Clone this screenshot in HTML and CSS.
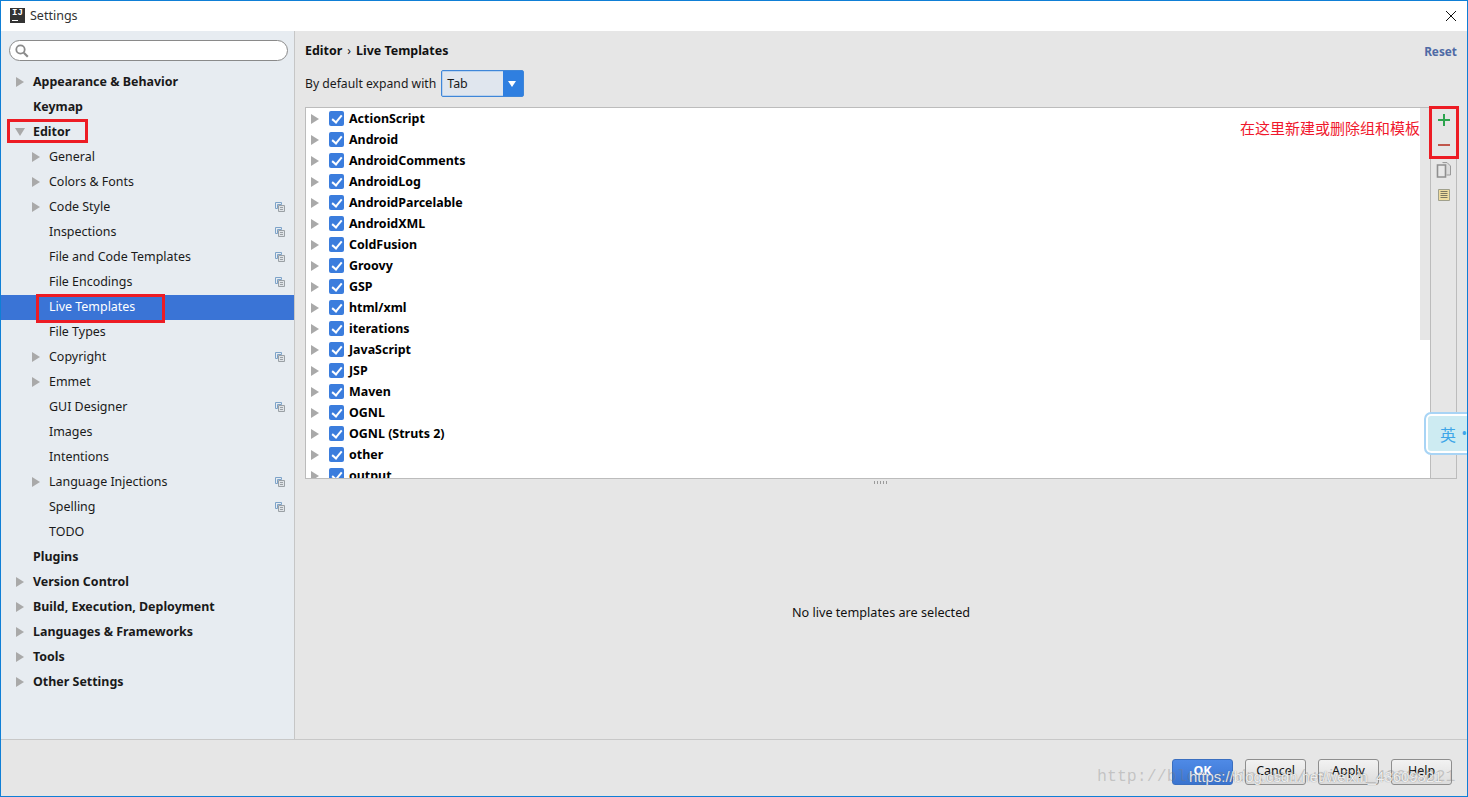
FILE: index.html
```html
<!DOCTYPE html>
<html lang="en">
<head>
<meta charset="utf-8">
<title>Settings</title>
<link rel="stylesheet" href="styles.css">
</head>
<body>
<div class="window">
  <header class="titlebar">
    <div class="app-logo"><span class="logo-text">IJ</span><span class="logo-bar"></span></div>
    <span class="title">Settings</span>
    <svg class="close" width="12" height="12" viewBox="0 0 12 12"><path d="M1 1l10 10M11 1L1 11" stroke="#111" stroke-width="1" fill="none"/></svg>
  </header>
  <div class="main">
    <aside class="sidebar">
      <div class="search">
        <svg width="16" height="16" viewBox="0 0 16 16"><circle cx="6.5" cy="6.5" r="4.2" fill="none" stroke="#8a8a8a" stroke-width="1.8"/><path d="M9.8 9.8l4 4" stroke="#8a8a8a" stroke-width="2.2"/></svg>
      </div>
      <nav class="tree">
        <div class="row top"><i class="tri"></i>Appearance &amp; Behavior</div>
        <div class="row top"><i class="none"></i>Keymap</div>
        <div class="row top"><i class="tri down"></i>Editor</div>
        <div class="row sub"><i class="tri"></i>General</div>
        <div class="row sub"><i class="tri"></i>Colors &amp; Fonts</div>
        <div class="row sub"><i class="tri"></i>Code Style<svg class="copy" width="10" height="10" viewBox="0 0 10 10"><use href="#proj"/></svg></div>
        <div class="row sub"><i class="none"></i>Inspections<svg class="copy" width="10" height="10" viewBox="0 0 10 10"><use href="#proj"/></svg></div>
        <div class="row sub"><i class="none"></i>File and Code Templates<svg class="copy" width="10" height="10" viewBox="0 0 10 10"><use href="#proj"/></svg></div>
        <div class="row sub"><i class="none"></i>File Encodings<svg class="copy" width="10" height="10" viewBox="0 0 10 10"><use href="#proj"/></svg></div>
        <div class="row sub selected"><i class="none"></i>Live Templates</div>
        <div class="row sub"><i class="none"></i>File Types</div>
        <div class="row sub"><i class="tri"></i>Copyright<svg class="copy" width="10" height="10" viewBox="0 0 10 10"><use href="#proj"/></svg></div>
        <div class="row sub"><i class="tri"></i>Emmet</div>
        <div class="row sub"><i class="none"></i>GUI Designer<svg class="copy" width="10" height="10" viewBox="0 0 10 10"><use href="#proj"/></svg></div>
        <div class="row sub"><i class="none"></i>Images</div>
        <div class="row sub"><i class="none"></i>Intentions</div>
        <div class="row sub"><i class="tri"></i>Language Injections<svg class="copy" width="10" height="10" viewBox="0 0 10 10"><use href="#proj"/></svg></div>
        <div class="row sub"><i class="none"></i>Spelling<svg class="copy" width="10" height="10" viewBox="0 0 10 10"><use href="#proj"/></svg></div>
        <div class="row sub"><i class="none"></i>TODO</div>
        <div class="row top"><i class="none"></i>Plugins</div>
        <div class="row top"><i class="tri"></i>Version Control</div>
        <div class="row top"><i class="tri"></i>Build, Execution, Deployment</div>
        <div class="row top"><i class="tri"></i>Languages &amp; Frameworks</div>
        <div class="row top"><i class="tri"></i>Tools</div>
        <div class="row top"><i class="tri"></i>Other Settings</div>
      </nav>
    </aside>
    <section class="content">
      <div class="crumbs"><b>Editor</b><span class="sep">›</span><b>Live Templates</b><a class="reset">Reset</a></div>
      <div class="expand">
        <span>By default expand with</span>
        <div class="combo"><span class="combo-value">Tab</span><span class="combo-arrow"></span></div>
      </div>
      <div class="panel">
        <div class="list">
          <div class="item"><i class="tri"></i><span class="check"></span>ActionScript</div>
          <div class="item"><i class="tri"></i><span class="check"></span>Android</div>
          <div class="item"><i class="tri"></i><span class="check"></span>AndroidComments</div>
          <div class="item"><i class="tri"></i><span class="check"></span>AndroidLog</div>
          <div class="item"><i class="tri"></i><span class="check"></span>AndroidParcelable</div>
          <div class="item"><i class="tri"></i><span class="check"></span>AndroidXML</div>
          <div class="item"><i class="tri"></i><span class="check"></span>ColdFusion</div>
          <div class="item"><i class="tri"></i><span class="check"></span>Groovy</div>
          <div class="item"><i class="tri"></i><span class="check"></span>GSP</div>
          <div class="item"><i class="tri"></i><span class="check"></span>html/xml</div>
          <div class="item"><i class="tri"></i><span class="check"></span>iterations</div>
          <div class="item"><i class="tri"></i><span class="check"></span>JavaScript</div>
          <div class="item"><i class="tri"></i><span class="check"></span>JSP</div>
          <div class="item"><i class="tri"></i><span class="check"></span>Maven</div>
          <div class="item"><i class="tri"></i><span class="check"></span>OGNL</div>
          <div class="item"><i class="tri"></i><span class="check"></span>OGNL (Struts 2)</div>
          <div class="item"><i class="tri"></i><span class="check"></span>other</div>
          <div class="item"><i class="tri"></i><span class="check"></span>output</div>
          <div class="scrollbar"></div>
          <div class="note">在这里新建或删除组和模板</div>
        </div>
        <div class="tools">
          <svg width="14" height="14" viewBox="0 0 14 14"><path d="M7 1v12M1 7h12" stroke="#2da44e" stroke-width="2"/></svg>
          <svg width="14" height="14" viewBox="0 0 14 14"><path d="M1 7h12" stroke="#c0574c" stroke-width="2"/></svg>
          <svg class="tool-doc" width="16" height="16" viewBox="0 0 16 16"><path d="M6.5.5h4.5l3.5 3.5v9h-4" fill="#dcdcdc" stroke="#9a9a9a"/><path d="M1.5 3h8v12h-8z" fill="#e8e8e8" stroke="#8f8f8f" stroke-width="1.6"/></svg>
          <svg width="14" height="14" viewBox="0 0 14 14"><path d="M1.5 1.5h11v11h-11z" fill="#f0dca0" stroke="#a0a08c"/><path d="M3.5 3.5h7M3.5 5.5h7M3.5 7.5h7M3.5 9.5h7" stroke="#7d7760"/></svg>
        </div>
      </div>
      <div class="splitter"></div>
      <div class="empty">No live templates are selected</div>
    </section>
  </div>
  <footer class="footer">
    <button class="btn primary">OK</button>
    <button class="btn">Cancel</button>
    <button class="btn">Apply</button>
    <button class="btn">Help</button>
  </footer>

  <div class="mark mark-editor"></div>
  <div class="mark mark-live"></div>
  <div class="mark mark-tools"></div>
  <div class="ime"><span>英</span><span class="ime-dot">•</span></div>
  <div class="wm wm-a">http://blog.csdn.net/weixin_43609821</div>
  <div class="wm wm-b">https://blog.csdn.net/weixin_43609821</div>
</div>
<svg class="defs" width="0" height="0" aria-hidden="true">
  <symbol id="proj" viewBox="0 0 10 10">
    <path d="M.5.5h6v2h-4v4h-2z" fill="none" stroke="#7da3c9"/>
    <path d="M3.5 3.5h6v6h-6z" fill="#dfe3e7" stroke="#9aa0a5"/>
    <path d="M5 5.5h3M5 7.5h3" stroke="#9aa0a5"/>
  </symbol>
</svg>
</body>
</html>
```
FILE: styles.css
```css
* { box-sizing: border-box; }
html, body { margin: 0; height: 100%; overflow: hidden; }
body { font-family: "Noto Sans", "Noto Sans CJK SC", sans-serif; font-size: 12.45px; color: #1a1a1a; }
.defs { position: absolute; }
.window { position: relative; width: 1468px; height: 797px; border: 1px solid #0f7fd6; display: flex; flex-direction: column; background: #e6e6e6; overflow: hidden; }
.titlebar { height: 30px; flex: none; background: #fff; display: flex; align-items: center; padding: 0 10px 2px 9px; gap: 5px; }
.app-logo { width: 15px; height: 15px; background: #333; position: relative; overflow: hidden; }
.logo-text { position: absolute; left: 2px; top: 1px; color: #fff; font: bold 9px/9px "Liberation Mono", monospace; }
.logo-bar { position: absolute; left: 2px; bottom: 2px; width: 6px; height: 1px; background: #fff; }
.title { font-size: 12.5px; color: #333; flex: 1; }
.close { margin-top: 1px; }
.main { flex: 1; display: flex; min-height: 0; }
.sidebar { width: 294px; flex: none; background: #e7ecf1; border-right: 1px solid #c6c6c6; padding-top: 9px; }
.search { margin-left: 8px; width: 279px; height: 21px; border: 1px solid #8a8a8a; border-radius: 11px; background: #fff; display: flex; align-items: center; padding-left: 4px; }
.tree { margin-top: 9px; }
.row { height: 25px; display: flex; align-items: center; position: relative; white-space: nowrap; padding-bottom: 2px; }
.top { font-weight: 700; padding-left: 15px; }
.sub { padding-left: 31px; }
.selected { background: #3a74d6; color: #fff; }
.tri { width: 0; height: 0; flex: none; border-style: solid; border-width: 5px 0 5px 8px; border-color: transparent transparent transparent #a9a9a9; margin-right: 9px; }
.tri.down { border-width: 8px 5px 0 5px; border-color: #a9a9a9 transparent transparent transparent; margin-left: -1px; margin-right: 8px; }
.none { width: 17px; flex: none; }
.copy { position: absolute; left: 274px; top: 7px; }
.content { flex: 1; min-width: 0; display: flex; flex-direction: column; padding: 0 10px; }
.crumbs { height: 39px; display: flex; align-items: center; color: #111; }
.sep { margin: 0 5px; font-size: 12px; }
.reset { margin-left: auto; font-weight: 700; color: #4f6aa5; font-size: 11.8px; }
.expand { height: 26px; display: flex; align-items: center; gap: 5px; }
.expand > span { font-size: 12.2px; }
.combo { width: 83px; height: 27px; display: flex; border: 1px solid #3f86d8; border-radius: 2px; background: #e0e6ee; box-shadow: inset 0 0 0 1px #b9d2ee; }
.combo-value { flex: 1; padding: 4px 0 0 5px; font-size: 12.45px; }
.combo-arrow { width: 20px; background: #2f7fe0; position: relative; }
.combo-arrow::after { content: ""; position: absolute; left: 5px; top: 10px; border-style: solid; border-width: 6px 4px 0; border-color: #fff transparent transparent; }
.panel { margin-top: 11px; height: 372px; display: flex; border: 1px solid #bcbcbc; border-right: 0; }
.list { position: relative; width: 1125px; flex: none; background: #fff; overflow: hidden; padding-left: 5px; border-right: 1px solid #bcbcbc; }
.item { height: 21px; display: flex; align-items: center; font-weight: 700; color: #000; white-space: nowrap; }
.item .tri { margin-right: 10px; }
.check { width: 15px; height: 15px; border-radius: 2px; background: #3b7ddd; margin-right: 5px; position: relative; flex: none; }
.check::after { content: ""; position: absolute; left: 5px; top: 2px; width: 4px; height: 8px; border: solid #fff; border-width: 0 2px 2px 0; transform: rotate(40deg); }
.scrollbar { position: absolute; right: 0; top: 0; width: 10px; height: 232px; background: #e6e6e6; }
.note { position: absolute; right: 10px; top: 10px; color: #f0182d; font-size: 15px; line-height: 20px; font-family: "Noto Sans CJK SC", sans-serif; }
.tools { width: 26px; flex: none; display: flex; flex-direction: column; align-items: center; padding-top: 5px; gap: 11px; border-right: 1px solid #bcbcbc; }
.tool-doc { margin: -1px 0; }
.splitter { height: 8px; position: relative; }
.splitter::after { content: ""; position: absolute; left: 569px; top: 2px; width: 15px; height: 3px; background: repeating-linear-gradient(90deg, #9a9a9a 0 1px, transparent 1px 3px); }
.empty { flex: 1; display: flex; align-items: center; justify-content: center; margin-top: -1px; color: #111; font-size: 12.65px; padding-bottom: 1px; }
.footer { height: 57px; flex: none; border-top: 1px solid #c8c8c8; display: flex; justify-content: flex-end; gap: 12px; padding: 19px 15px 0 0; }
.btn { width: 61px; height: 26px; border: 1px solid #8e8e8e; border-radius: 3px; background: linear-gradient(#f2f2f2, #dcdcdc); font: 12.45px "Noto Sans", sans-serif; color: #111; padding: 0 0 3px; }
.primary { background: linear-gradient(#4f8ae6, #3a74d0); border-color: #3a6fc0; color: #fff; font-weight: 700; }
.mark { position: absolute; border: 3px solid #ed1c24; pointer-events: none; }
.mark-editor { left: 6px; top: 118px; width: 81px; height: 24px; }
.mark-live { left: 35px; top: 293px; width: 129px; height: 29px; }
.mark-tools { left: 1428px; top: 105px; width: 30px; height: 53px; }
.ime { position: absolute; left: 1423px; top: 411px; width: 60px; height: 43px; border: 2px solid #a8d4f5; border-radius: 7px; background: #cdebf2; box-shadow: inset 0 0 0 2px #fff; color: #3ea6e8; font-size: 16px; display: flex; align-items: center; gap: 6px; padding-left: 14px; font-family: "Noto Sans CJK SC", sans-serif; }
.ime-dot { font-family: "Noto Sans", sans-serif; font-weight: 700; font-size: 12px; }
.wm { position: absolute; white-space: nowrap; pointer-events: none; }
.wm-a { left: 1096px; top: 766px; font: 16.6px "Liberation Mono", monospace; color: rgba(120,120,120,.32); }
.wm-b { left: 1188px; top: 768px; font: 14.9px "Liberation Sans", sans-serif; color: rgba(255,255,255,.85); text-shadow: 0 0 1px rgba(90,90,90,.7); }
```
